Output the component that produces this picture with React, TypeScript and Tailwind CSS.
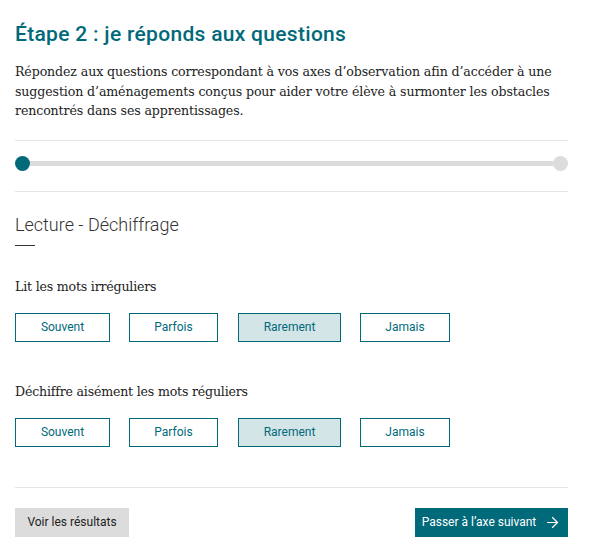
import { ArrowRight } from "lucide-react"

const sans = "font-['Roboto','Liberation_Sans',sans-serif]"
const serif = "font-['DejaVu_Serif','Liberation_Serif',serif]"

const choices = [
  { label: "Souvent", w: "w-[95px]" },
  { label: "Parfois", w: "w-[89px]" },
  { label: "Rarement", w: "w-[103px] ml-[1px]" },
  { label: "Jamais", w: "w-[90px]" },
]

function Question({ label, selected }: { label: string; selected: string }) {
  return (
    <div>
      <p className={`${serif} text-[12.6px] leading-[20px] tracking-[-0.2px] text-[#222]`}>
        {label}
      </p>
      <div className="mt-[16px] flex gap-[19px]">
        {choices.map((c) => (
          <button
            key={c.label}
            className={`${sans} ${c.w} h-[29px] border border-[#00697a] text-[12px] text-[#00697a] ${
              c.label === selected ? "bg-[#d4e5e8]" : "bg-white"
            }`}
          >
            {c.label}
          </button>
        ))}
      </div>
    </div>
  )
}

export default function App() {
  return (
    <div className="min-h-screen bg-white">
      <div className="mx-[15px] w-[553px] pt-[20px]">
        <h1
          className={`${sans} text-[21px] font-medium leading-[28px] tracking-[0.3px] text-[#00697a]`}
        >
          Étape 2 : je réponds aux questions
        </h1>
        <p
          className={`${serif} mt-[14px] text-[12.6px] leading-[19.5px] tracking-[-0.12px] text-[#222]`}
        >
          Répondez aux questions correspondant à vos axes d’observation afin d’accéder à une
          suggestion d’aménagements conçus pour aider votre élève à surmonter les obstacles
          rencontrés dans ses apprentissages.
        </p>

        {/* progress */}
        <div className="mt-[19px] border-y border-[#e6e6e6] pb-[20px] pt-[15px]">
          <div className="flex items-center">
            <div className="h-[15px] w-[15px] rounded-full bg-[#00697a]" />
            <div className="h-[5px] flex-1 bg-[#dcdcdc]" />
            <div className="h-[15px] w-[15px] rounded-full bg-[#dcdcdc]" />
          </div>
        </div>

        <h2 className={`${sans} mt-[21px] text-[18px] font-light leading-[24px] text-[#333]`}>
          Lecture - Déchiffrage
        </h2>
        <div className="mt-[8px] h-px w-[20px] bg-[#333]" />

        <div className="mt-[31px]">
          <Question label="Lit les mots irréguliers" selected="Rarement" />
        </div>
        <div className="mt-[40px]">
          <Question label="Déchiffre aisément les mots réguliers" selected="Rarement" />
        </div>

        <div className="mt-[40px] flex justify-between border-t border-[#e6e6e6] pt-[20px]">
          <button
            className={`${sans} h-[29px] w-[114px] bg-[#dcdcdc] text-[12px] text-[#222]`}
          >
            Voir les résultats
          </button>
          <button
            className={`${sans} flex h-[29px] w-[153px] items-center justify-center gap-[8px] bg-[#00697a] text-[12px] text-white`}
          >
            Passer à l’axe suivant
            <ArrowRight className="h-[17px] w-[17px]" strokeWidth={1.75} />
          </button>
        </div>
      </div>
    </div>
  )
}
